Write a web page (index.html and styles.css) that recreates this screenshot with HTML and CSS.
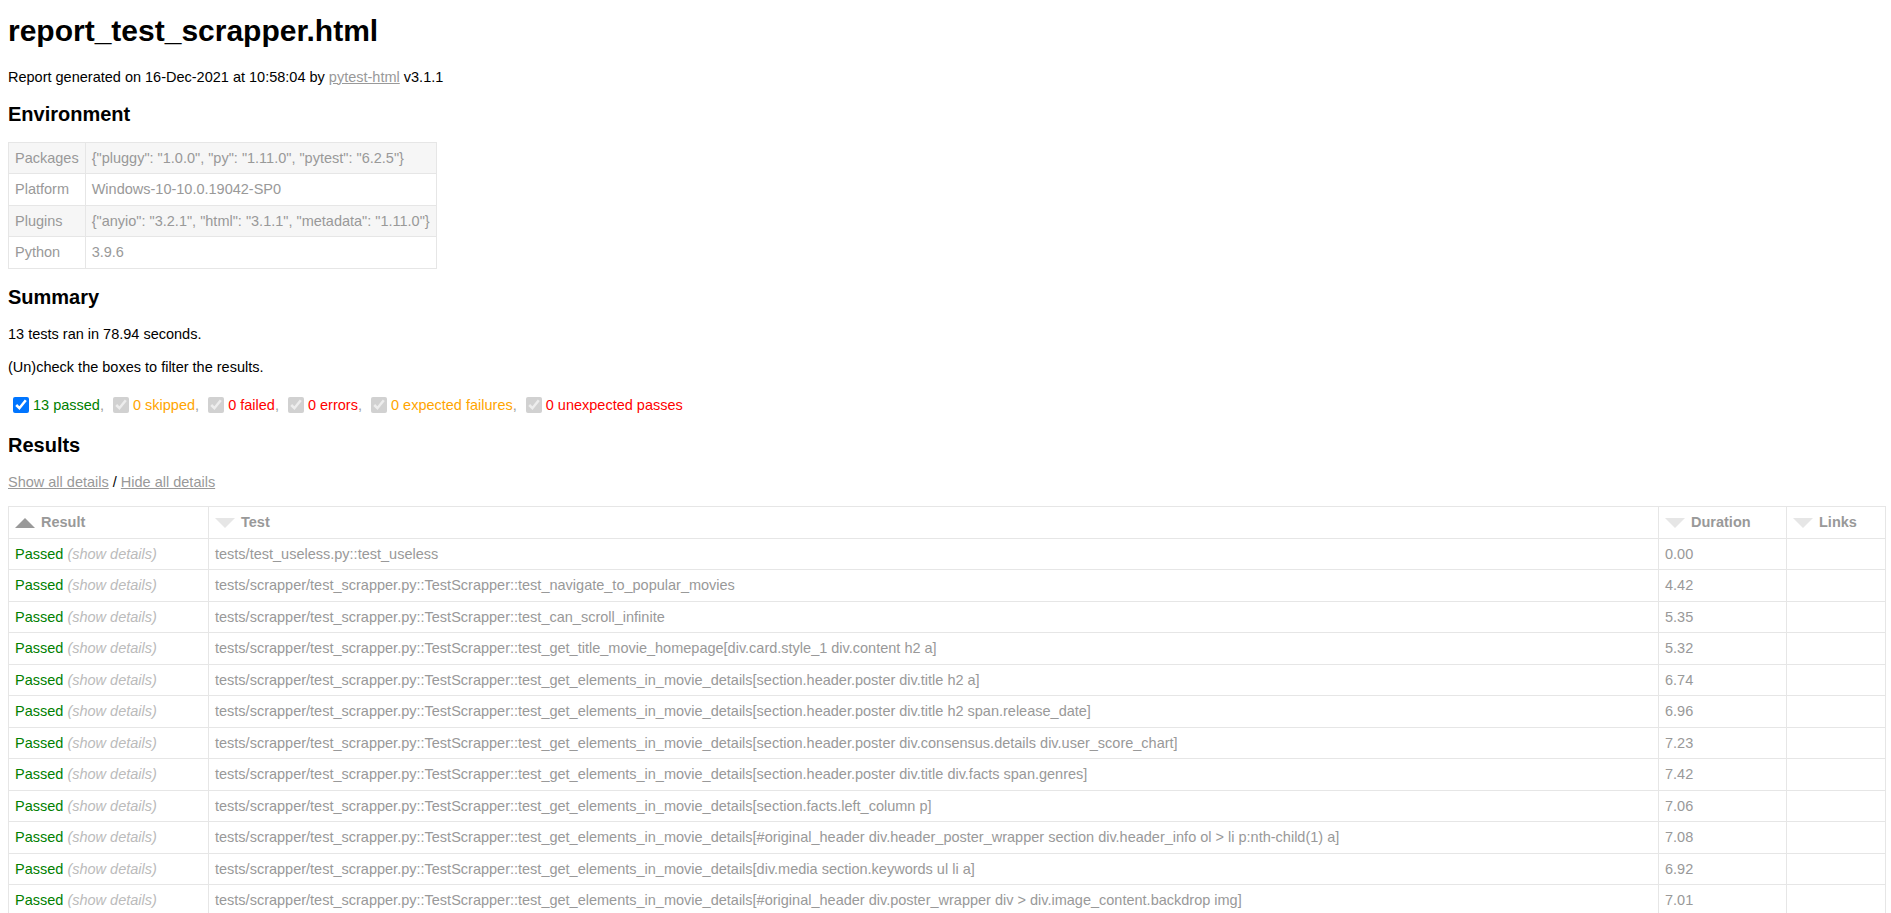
FILE: index.html
```html
<!DOCTYPE html>
<html>
<head>
<meta charset="utf-8">
<title>report_test_scrapper.html</title>
<link rel="stylesheet" href="styles.css">
</head>
<body>
<h1>report_test_scrapper.html</h1>
<p>Report generated on 16-Dec-2021 at 10:58:04 by <a href="#">pytest-html</a> v3.1.1</p>
<h2>Environment</h2>
<table class="environment">
  <tr><td class="env-key">Packages</td><td>{"pluggy": "1.0.0", "py": "1.11.0", "pytest": "6.2.5"}</td></tr>
  <tr><td class="env-key">Platform</td><td>Windows-10-10.0.19042-SP0</td></tr>
  <tr><td class="env-key">Plugins</td><td>{"anyio": "3.2.1", "html": "3.1.1", "metadata": "1.11.0"}</td></tr>
  <tr><td class="env-key">Python</td><td>3.9.6</td></tr>
</table>
<h2>Summary</h2>
<p class="summary-line">13 tests ran in 78.94 seconds. </p>
<p class="filter-hint">(Un)check the boxes to filter the results.</p>
<p class="filter"><input class="filter-box" type="checkbox" checked><span class="passed">13 passed</span>, <input class="filter-box" type="checkbox" checked disabled><span class="skipped">0 skipped</span>, <input class="filter-box" type="checkbox" checked disabled><span class="failed">0 failed</span>, <input class="filter-box" type="checkbox" checked disabled><span class="error">0 errors</span>, <input class="filter-box" type="checkbox" checked disabled><span class="xfailed">0 expected failures</span>, <input class="filter-box" type="checkbox" checked disabled><span class="xpassed">0 unexpected passes</span></p>
<h2 class="results-title">Results</h2>
<p class="show-hide"><a href="#">Show all details</a> / <a href="#">Hide all details</a></p>
<table class="results-table">
  <colgroup>
    <col class="c-result">
    <col class="c-test">
    <col class="c-duration">
    <col class="c-links">
  </colgroup>
  <thead>
    <tr>
      <th class="asc"><span class="sort-icon"></span>Result</th>
      <th class="inactive"><span class="sort-icon"></span>Test</th>
      <th class="inactive"><span class="sort-icon"></span>Duration</th>
      <th class="inactive"><span class="sort-icon"></span>Links</th>
    </tr>
  </thead>
  <tbody>
    <tr><td class="col-result">Passed<span class="expander"> (show details)</span></td><td>tests/test_useless.py::test_useless</td><td>0.00</td><td></td></tr>
    <tr><td class="col-result">Passed<span class="expander"> (show details)</span></td><td>tests/scrapper/test_scrapper.py::TestScrapper::test_navigate_to_popular_movies</td><td>4.42</td><td></td></tr>
    <tr><td class="col-result">Passed<span class="expander"> (show details)</span></td><td>tests/scrapper/test_scrapper.py::TestScrapper::test_can_scroll_infinite</td><td>5.35</td><td></td></tr>
    <tr><td class="col-result">Passed<span class="expander"> (show details)</span></td><td>tests/scrapper/test_scrapper.py::TestScrapper::test_get_title_movie_homepage[div.card.style_1 div.content h2 a]</td><td>5.32</td><td></td></tr>
    <tr><td class="col-result">Passed<span class="expander"> (show details)</span></td><td>tests/scrapper/test_scrapper.py::TestScrapper::test_get_elements_in_movie_details[section.header.poster div.title h2 a]</td><td>6.74</td><td></td></tr>
    <tr><td class="col-result">Passed<span class="expander"> (show details)</span></td><td>tests/scrapper/test_scrapper.py::TestScrapper::test_get_elements_in_movie_details[section.header.poster div.title h2 span.release_date]</td><td>6.96</td><td></td></tr>
    <tr><td class="col-result">Passed<span class="expander"> (show details)</span></td><td>tests/scrapper/test_scrapper.py::TestScrapper::test_get_elements_in_movie_details[section.header.poster div.consensus.details div.user_score_chart]</td><td>7.23</td><td></td></tr>
    <tr><td class="col-result">Passed<span class="expander"> (show details)</span></td><td>tests/scrapper/test_scrapper.py::TestScrapper::test_get_elements_in_movie_details[section.header.poster div.title div.facts span.genres]</td><td>7.42</td><td></td></tr>
    <tr><td class="col-result">Passed<span class="expander"> (show details)</span></td><td>tests/scrapper/test_scrapper.py::TestScrapper::test_get_elements_in_movie_details[section.facts.left_column p]</td><td>7.06</td><td></td></tr>
    <tr><td class="col-result">Passed<span class="expander"> (show details)</span></td><td>tests/scrapper/test_scrapper.py::TestScrapper::test_get_elements_in_movie_details[#original_header div.header_poster_wrapper section div.header_info ol &gt; li p:nth-child(1) a]</td><td>7.08</td><td></td></tr>
    <tr><td class="col-result">Passed<span class="expander"> (show details)</span></td><td>tests/scrapper/test_scrapper.py::TestScrapper::test_get_elements_in_movie_details[div.media section.keywords ul li a]</td><td>6.92</td><td></td></tr>
    <tr><td class="col-result">Passed<span class="expander"> (show details)</span></td><td>tests/scrapper/test_scrapper.py::TestScrapper::test_get_elements_in_movie_details[#original_header div.poster_wrapper div &gt; div.image_content.backdrop img]</td><td>7.01</td><td></td></tr>
  </tbody>
</table>
</body>
</html>
```

FILE: styles.css
```css
html {
  overflow: hidden;
  background: #fff;
}

body {
  margin: 0 5px 0 8px;
  font-family: "Liberation Sans", Arial, Helvetica, sans-serif;
  font-size: 14.5px;
  color: #999;
}

h1 {
  font-size: 30px;
  line-height: 34.5px;
  font-weight: bold;
  color: #000;
  margin: 14px 0 20px;
}

h2 {
  font-size: 20px;
  line-height: 23px;
  font-weight: bold;
  color: #000;
  margin: 17.5px 0 15.5px;
}

.results-title {
  margin-top: 17.4px;
}

p {
  color: #000;
  margin: 16px 0;
  line-height: 17.25px;
}

.summary-line {
  margin-top: 16.8px;
}

.filter-hint {
  margin-top: 15.4px;
}

a {
  color: #999;
}

table {
  border-collapse: collapse;
}

.environment td {
  padding: 6px 6px;
  line-height: 18.5px;
  border: 1px solid #e6e6e6;
  white-space: nowrap;
}

.environment tr:nth-child(odd) {
  background-color: #f6f6f6;
}

.filter {
  line-height: 24px;
  color: #999;
  margin: 13.4px 0 15px;
}

.filter-box {
  width: 16px;
  height: 16px;
  margin: 0 4px 0 5px;
  vertical-align: -3px;
}

.passed { color: green; }
.skipped, .xfailed { color: orange; }
.failed, .error, .xpassed { color: red; }

.show-hide {
  margin: 17.2px 0 15px;
}

.results-table {
  width: 100%;
  table-layout: fixed;
  border: 1px solid #e6e6e6;
  color: #999;
  font-size: 14.5px;
}

.c-result { width: 200px; }
.c-duration { width: 128px; }
.c-links { width: 99px; }

.results-table th,
.results-table td {
  padding: 6px 6px;
  line-height: 18.5px;
  border: 1px solid #e6e6e6;
  text-align: left;
  white-space: nowrap;
  overflow: hidden;
}

.results-table th {
  font-weight: bold;
}

.sort-icon {
  float: left;
  width: 0;
  height: 0;
  margin-top: 5px;
  margin-right: 6px;
  border-left: 10px solid transparent;
  border-right: 10px solid transparent;
}

.inactive .sort-icon {
  border-top: 10px solid #e6e6e6;
}

.asc .sort-icon {
  border-bottom: 10px solid #999;
}

.col-result {
  color: green;
}

.expander {
  color: #bbb;
  font-style: italic;
}
```
